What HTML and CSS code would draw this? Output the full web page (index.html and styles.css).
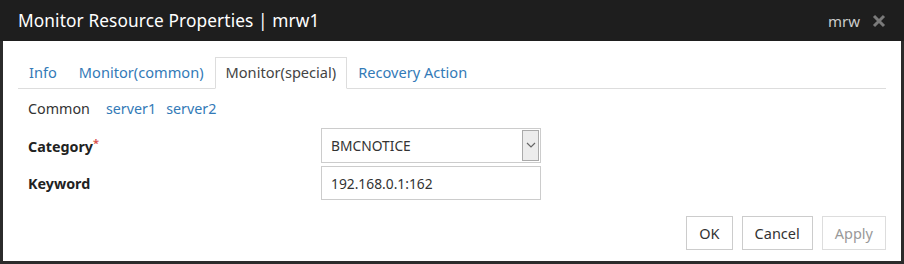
FILE: index.html
```html
<!DOCTYPE html>
<html lang="en">

<head>
    <meta charset="UTF-8">
    <meta name="viewport" content="width=device-width, initial-scale=1.0">
    <title>Monitor Resource Properties</title>
    <link rel="stylesheet" href="styles.css">
</head>

<body>
    <div class="dialog">
        <div class="dialog-header">
            <span class="dialog-title">Monitor Resource Properties | mrw1</span>
            <span class="header-right">
                <span class="user">mrw</span>
                <svg class="close" width="14" height="14" viewBox="0 0 14 14">
                    <path d="M2 2L12 12M12 2L2 12" stroke="#7a7a7a" stroke-width="3" />
                </svg>
            </span>
        </div>

        <div class="dialog-body">
            <ul class="tabs">
                <li><a href="#">Info</a></li>
                <li><a href="#">Monitor(common)</a></li>
                <li class="active"><a href="#">Monitor(special)</a></li>
                <li><a href="#">Recovery Action</a></li>
            </ul>

            <div class="subtabs">
                <span class="current">Common</span>
                <a href="#">server1</a>
                <a href="#">server2</a>
            </div>

            <div class="form-row">
                <label>Category<span class="required">*</span></label>
                <div class="select-box">
                    <span class="select-value">BMCNOTICE</span>
                    <span class="select-arrow">
                        <svg width="10" height="6" viewBox="0 0 10 6">
                            <path d="M1 1L5 5L9 1" fill="none" stroke="#666" stroke-width="1.2" />
                        </svg>
                    </span>
                </div>
            </div>

            <div class="form-row">
                <label>Keyword</label>
                <input type="text" class="text-input" value="192.168.0.1:162">
            </div>

            <div class="buttons">
                <button>OK</button>
                <button>Cancel</button>
                <button class="disabled">Apply</button>
            </div>
        </div>
    </div>
</body>

</html>
```

FILE: styles.css
```css
* {
    margin: 0;
    padding: 0;
    box-sizing: border-box;
}

body {
    font-family: "Noto Sans", Arial, sans-serif;
    background-color: #fff;
    width: 904px;
    height: 264px;
}

.dialog {
    height: 264px;
    border: 3px solid #2b2b2b;
    border-top: none;
    display: flex;
    flex-direction: column;
}

.dialog-header {
    height: 41px;
    background-color: #1e1e1e;
    color: #fff;
    display: flex;
    align-items: center;
    justify-content: space-between;
    padding: 0 18px 0 18px;
    margin: 0 -3px;
}

.dialog-title {
    font-size: 17.3px;
    letter-spacing: 0.1px;
}

.header-right {
    display: flex;
    align-items: center;
    gap: 12px;
}

.user {
    font-size: 15px;
    color: #ccc;
}

.close {
    display: block;
}

.dialog-body {
    flex: 1;
    padding: 16px 15px 0 15px;
}

.tabs {
    list-style: none;
    display: flex;
    border-bottom: 1px solid #ddd;
    height: 32px;
}

.tabs li {
    margin-bottom: -1px;
}

.tabs a {
    display: block;
    padding: 0 10px;
    height: 32px;
    line-height: 29px;
    font-size: 14.6px;
    color: #337ab7;
    text-decoration: none;
    border: 1px solid transparent;
}

.tabs .active a {
    color: #444;
    background-color: #fff;
    border-color: #ddd;
    border-bottom-color: #fff;
}

.subtabs {
    display: flex;
    gap: 10px;
    padding: 10px 0 0 10px;
    height: 36px;
    font-size: 14.3px;
}

.subtabs .current {
    color: #333;
    margin-right: 6px;
}

.subtabs a {
    color: #337ab7;
    text-decoration: none;
}

.form-row {
    display: flex;
    align-items: center;
    height: 36px;
    margin-top: 2px;
    padding-left: 10px;
}

.form-row label {
    width: 293px;
    font-weight: bold;
    font-size: 14.3px;
    color: #222;
}

.required {
    color: #d9534f;
    font-size: 11px;
    vertical-align: 5px;
}

.select-box {
    width: 220px;
    height: 35px;
    border: 1px solid #ccc;
    display: flex;
    align-items: center;
    justify-content: space-between;
}

.select-value {
    padding-left: 9px;
    font-size: 13.8px;
    color: #333;
}

.select-arrow {
    width: 17px;
    height: 31px;
    margin-right: 1px;
    background-color: #ececec;
    border: 1px solid #aaa;
    display: flex;
    align-items: center;
    justify-content: center;
}

.text-input {
    width: 220px;
    height: 34px;
    border: 1px solid #ccc;
    padding-left: 9px;
    font-family: "Noto Sans", Arial, sans-serif;
    font-size: 13.8px;
    color: #333;
}

.buttons {
    display: flex;
    justify-content: flex-end;
    gap: 9px;
    margin-top: 15px;
}

.buttons button {
    height: 34px;
    padding: 0 12px;
    font-family: "Noto Sans", Arial, sans-serif;
    font-size: 14.5px;
    color: #333;
    background-color: #fff;
    border: 1px solid #ccc;
}

.buttons .disabled {
    color: #999;
    border-color: #ddd;
}
```
